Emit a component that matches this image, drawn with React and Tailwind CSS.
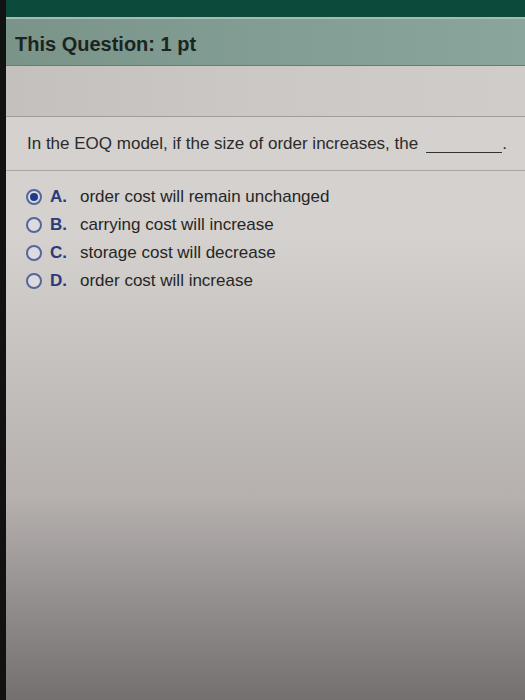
import React from 'react';

const options = [
    { letter: 'A.', text: 'order cost will remain unchanged', checked: true },
    { letter: 'B.', text: 'carrying cost will increase' },
    { letter: 'C.', text: 'storage cost will decrease' },
    { letter: 'D.', text: 'order cost will increase' },
];

function Radio({ checked }) {
    return (
        <span className="flex items-center justify-center w-[16px] h-[16px] rounded-full border-2 border-[#56669a] bg-[#dcdce0]">
            {checked && <span className="w-[8px] h-[8px] rounded-full bg-[#1f3a8a]" />}
        </span>
    );
}

export default function App() {
    return (
        <div className="flex w-full h-[700px] bg-[#121212] font-['Liberation_Sans',Arial,sans-serif] overflow-hidden">
            {/* bord de l'écran */}
            <div className="w-[6px] shrink-0" />

            <div className="flex flex-col flex-1">
                {/* barre verte */}
                <div className="h-[17px] bg-[#0c4a3c] shrink-0" />
                <div className="h-[2px] bg-[#a9b9b3] shrink-0" />

                {/* en-tête */}
                <div className="h-[47px] shrink-0 flex items-center pl-[9px] bg-gradient-to-r from-[#7a948a] to-[#8aa69c] border-b border-[#6a7a74]">
                    <span className="text-[20px] font-bold text-[#1c2420] mt-[4px]">
                        This Question: 1 pt
                    </span>
                </div>

                {/* zone grise */}
                <div className="h-[51px] shrink-0 bg-gradient-to-r from-[#c4c0be] via-[#ccc8c6] to-[#d0ccca] border-b border-[#a09e9c]" />

                {/* contenu */}
                <div className="flex-1 flex flex-col bg-gradient-to-b from-[#d4d1ce] from-20% via-[#b6b1af] via-65% to-[#747070]">
                    <div className="flex items-end pl-[21px] pt-[14px] pb-[13px] text-[17px] text-[#2b2b2b] border-b border-[#a7a5a2]">
                        <span>In the EOQ model, if the size of order increases, the</span>
                        <span className="ml-[8px] w-[76px] border-b border-[#333] mb-[4px]" />
                        <span>.</span>
                    </div>

                    <div className="flex flex-col gap-[8px] pl-[20px] pt-[16px]">
                        {options.map((o) => (
                            <div key={o.letter} className="flex items-center h-[20px] text-[17px]">
                                <Radio checked={o.checked} />
                                <span className="ml-[8px] w-[30px] font-bold text-[#2c3a78]">{o.letter}</span>
                                <span className="text-[#262626]">{o.text}</span>
                            </div>
                        ))}
                    </div>
                </div>
            </div>
        </div>
    );
}
